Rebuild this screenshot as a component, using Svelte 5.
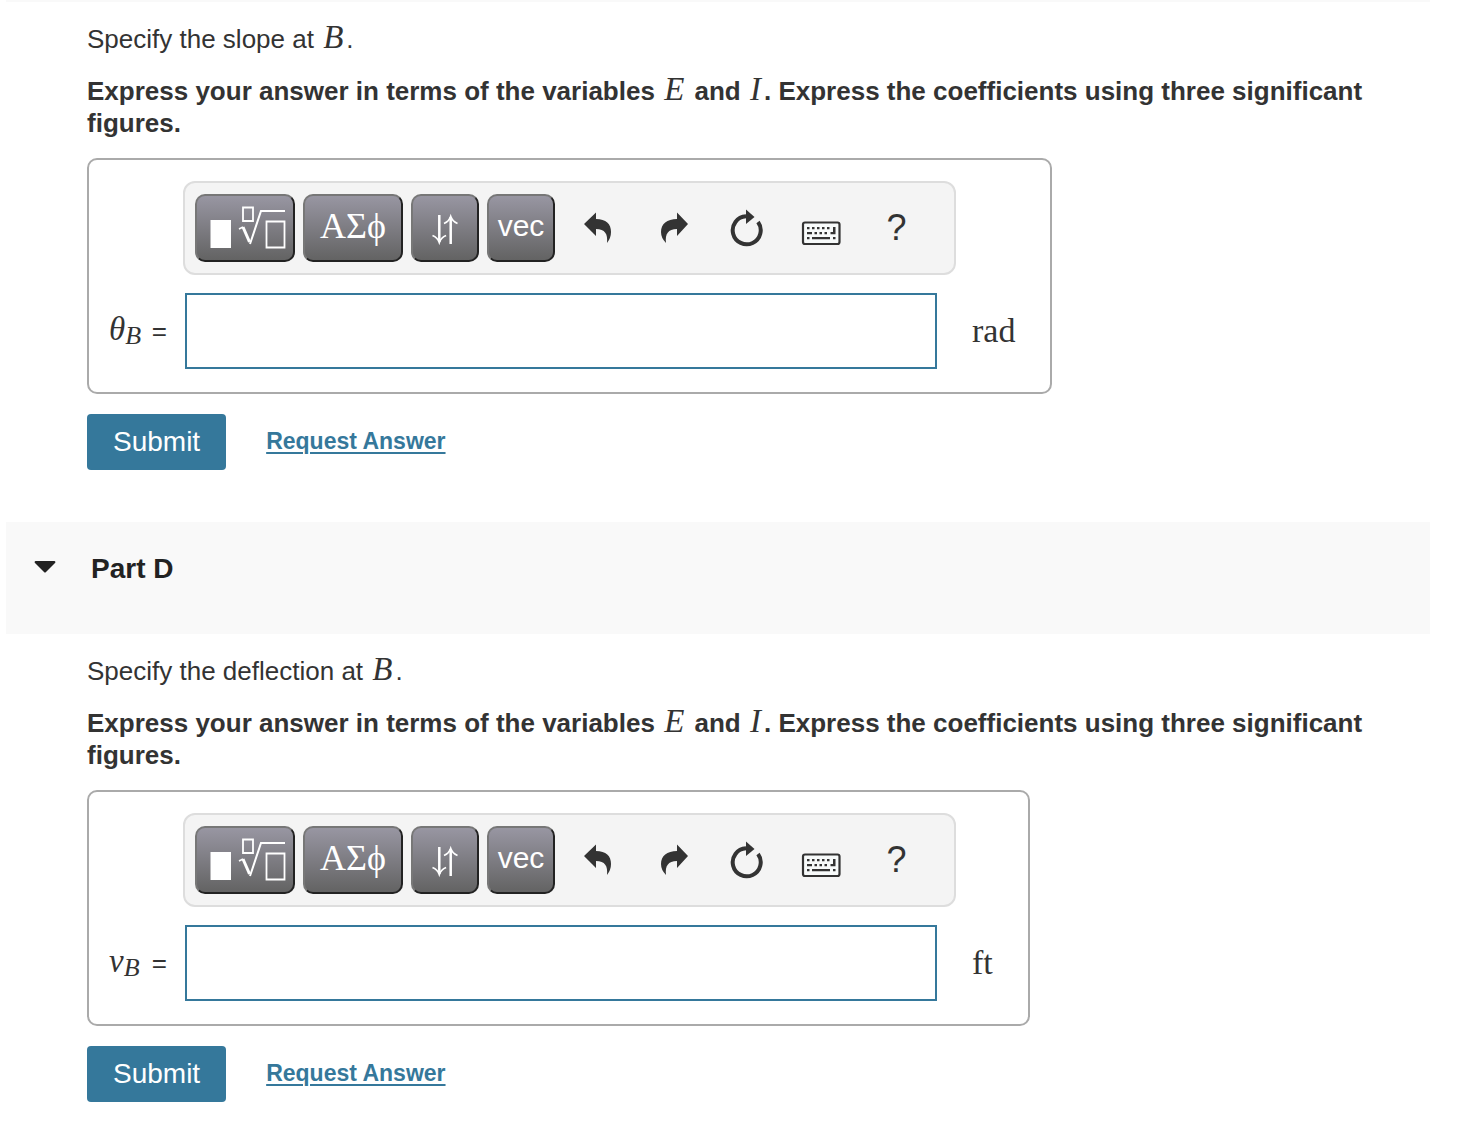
<script lang="ts">
  interface Part {
    id: string;
    heading: string | null;
    quantity: string;
    symbol: string;
    unit: string;
  }

  const parts: Part[] = [
    { id: 'part-c', heading: null, quantity: 'slope', symbol: 'θ', unit: 'rad' },
    { id: 'part-d', heading: 'Part D', quantity: 'deflection', symbol: 'v', unit: 'ft' }
  ];

  let answers = $state(['', '']);
  let open = $state([true, true]);
</script>

<main>
  {#each parts as part, i}
    <section>
      <header class:strip={!part.heading}>
        {#if part.heading}
          <h2>
            <button type="button" class="toggle" aria-expanded={open[i]} onclick={() => (open[i] = !open[i])}>
              <svg class="caret" class:closed={!open[i]} viewBox="0 0 22 16" aria-hidden="true">
                <path d="M1.500 0h19q1.600 .6 .5 2l-9 9q-1 1-2 0l-9-9q-1.100-1.400 .5-2z" fill="#222" />
              </svg>
              {part.heading}
            </button>
          </h2>
        {/if}
      </header>

      {#if open[i]}
        <div class="body">
          <p>Specify the {part.quantity} at <i class="math">B</i>.</p>
          <p class="instructions">
            Express your answer in terms of the variables <i class="math">E</i> and <i class="math">I</i>. Express the
            coefficients using three significant figures.
          </p>

          <form id={part.id} class="answer" onsubmit={(e) => e.preventDefault()}>
            <div class="toolbar" role="toolbar" aria-label="Math tools">
              <button type="button" class="key wide" aria-label="Templates">
                <svg viewBox="2 2 96 64" aria-hidden="true">
                  <path d="M15.500 26h20.500v28h-20.500z" fill="#fff" />
                  <g fill="none" stroke="#fff">
                    <path d="M48 13.500h10v13.500h-10z" stroke-width="1.800" />
                    <path d="M71.500 27.500h18v26h-18z" stroke-width="1.800" />
                    <path d="M44 35l4-2" stroke-width="1.600" />
                    <path d="M48 33l6.500 15" stroke-width="3" />
                    <path d="M55 50L66 17h24" stroke-width="2" />
                  </g>
                </svg>
              </button>
              <button type="button" class="key wide greek" aria-label="Symbols">ΑΣϕ</button>
              <button type="button" class="key" aria-label="Subscript and superscript">
                <svg viewBox="2 2 64 64" aria-hidden="true">
                  <g fill="none" stroke="#fff" stroke-width="2.500">
                    <path d="M28.300 21v27M39.700 50V23" />
                    <path d="M21.500 41.500q5 2 6.800 7q1.800-5 6.800-7M33 29.500q5-2 6.700-7q1.800 5 6.800 7" stroke-width="1.800" />
                  </g>
                </svg>
              </button>
              <button type="button" class="key vec">vec</button>

              <div class="tools">
                <button type="button" class="tool" aria-label="Undo">
                  <svg viewBox="0 0 67 68" aria-hidden="true">
                    <path d="M19 30L31 18.500V25C41 25 46 30 46 38Q46 44 42 49C43 40 40 35 31 35V42z" fill="#333" />
                  </svg>
                </button>
                <button type="button" class="tool" aria-label="Redo">
                  <svg viewBox="0 0 67 68" aria-hidden="true">
                    <path d="M48 30L37 18.500V25C27 25 21 30 21 38Q21 44 26 49C25 40 28 35 37 35V42z" fill="#333" />
                  </svg>
                </button>
                <button type="button" class="tool" aria-label="Reset">
                  <svg viewBox="0 0 67 68" aria-hidden="true">
                    <path d="M43 28A14 14 0 1 1 31 22.300" fill="none" stroke="#333" stroke-width="4" />
                    <path d="M31 15.500l8.500 7.500l-8.500 7z" fill="#333" />
                  </svg>
                </button>
                <button type="button" class="tool" aria-label="Keyboard">
                  <svg viewBox="0 0 67 68" aria-hidden="true">
                    <rect x="13" y="28.500" width="36.500" height="21.500" rx="2" fill="#f7fafa" stroke="#333" stroke-width="2.200" />
                    <path
                      d="M17 33h2.500v2.200h-2.500zM22 33h2.500v2.200h-2.500zM27 33h2.500v2.200h-2.500zM32 33h2.500v2.200h-2.500zM37 33h2.500v2.200h-2.500zM43 33h2.500v7.200h-5v-2.200h2.500zM17 38h5v2.200h-5zM24.500 38h2.500v2.200h-2.500zM29.500 38h2.500v2.200h-2.500zM34.500 38h2.500v2.200h-2.500zM17 43h2.500v2.200h-2.500zM22 43h18v2.200h-18zM43 43h2.500v2.200h-2.500z"
                      fill="#333"
                    />
                  </svg>
                </button>
                <button type="button" class="tool help" aria-label="Help">?</button>
              </div>
            </div>

            <label for="{part.id}-answer">
              <i class="math">{part.symbol}</i><sub>B</sub>
              <span class="equals">=</span>
            </label>
            <input id="{part.id}-answer" type="text" autocomplete="off" bind:value={answers[i]} />
            <span class="unit">{part.unit}</span>
          </form>

          <div class="actions">
            <button type="submit" form={part.id} class="submit">Submit</button>
            <a href="#{part.id}">Request Answer</a>
          </div>
        </div>
      {/if}
    </section>
  {/each}
</main>

<style>
  :global(body) {
    margin: 0;
    background: #fff;
  }

  main {
    padding: 0 42px 0 6px;
    font-family: 'Liberation Sans', Arial, sans-serif;
    font-size: 26px;
    line-height: 32px;
    color: #333;
  }

  button {
    font-family: inherit;
    cursor: pointer;
  }

  header {
    box-sizing: border-box;
    height: 112px;
    padding: 31px 28px;
    background: #f9f9f9;
  }

  header.strip {
    height: 2px;
    padding: 0;
  }

  h2 {
    margin: 0;
    font-size: 28px;
  }

  .toggle {
    display: flex;
    align-items: center;
    gap: 35px;
    padding: 0;
    border: 0;
    background: none;
    color: #222;
    font-size: 28px;
    font-weight: 700;
    line-height: 32px;
  }

  .caret {
    width: 22px;
    height: 16px;
  }

  .caret.closed {
    transform: rotate(-90deg);
  }

  .body {
    padding: 21px 0 52px 81px;
  }

  p {
    margin: 0 0 20px;
  }

  .instructions {
    margin-bottom: 19px;
    font-weight: 700;
  }

  .math,
  sub {
    font-family: 'Liberation Serif', 'Times New Roman', serif;
    font-size: 33px;
    font-style: italic;
    font-weight: 400;
    line-height: 24px;
  }

  p .math {
    margin: 0 3px 0 2px;
  }

  sub {
    position: relative;
    top: 4px;
    font-size: 26px;
    vertical-align: baseline;
  }

  .answer {
    display: grid;
    grid-template-columns: 74px minmax(0, 789px) auto;
    row-gap: 18px;
    align-items: center;
    box-sizing: border-box;
    width: fit-content;
    max-width: 100%;
    padding: 21px 35px 23px 20px;
    border: 2px solid #aaa;
    border-radius: 10px;
  }

  .toolbar {
    grid-column: 2;
    display: flex;
    gap: 8px;
    box-sizing: border-box;
    margin-right: 16px;
    padding: 11px 10px;
    border: 2px solid #ddd;
    border-radius: 12px;
    background: #f4f4f4;
  }

  .key {
    flex: none;
    box-sizing: border-box;
    width: 68px;
    height: 68px;
    padding: 0;
    border: 2px solid;
    border-color: #777 #222 #222 #777;
    border-radius: 10px;
    background: linear-gradient(#9896a2, #636363);
    color: #fff;
  }

  .wide {
    width: 100px;
  }

  .key svg,
  .tool svg {
    display: block;
    width: 100%;
    height: 100%;
  }

  .greek {
    padding-bottom: 4px;
    font-family: 'Liberation Serif', 'Times New Roman', serif;
    font-size: 36px;
  }

  .vec {
    padding-bottom: 4px;
    font-size: 30px;
  }

  .tools {
    display: flex;
    gap: 8px;
    margin-left: 2px;
  }

  .tool {
    width: 67px;
    height: 68px;
    padding: 0;
    border: 0;
    background: none;
    color: #333;
  }

  .help {
    padding-right: 4px;
    font-size: 36px;
  }

  label {
    grid-column: 1;
    display: flex;
    align-items: baseline;
    padding-right: 16px;
  }

  .equals {
    margin-left: auto;
  }

  input {
    box-sizing: border-box;
    height: 76px;
    margin: 0 35px 0 2px;
    padding: 0 12px;
    border: 2px solid #35789b;
    border-radius: 0;
    background: #fff;
    color: #333;
    font-family: inherit;
    font-size: 26px;
  }

  .unit {
    font-family: 'Liberation Serif', 'Times New Roman', serif;
    font-size: 34px;
  }

  .actions {
    display: flex;
    align-items: center;
    gap: 40px;
    margin-top: 20px;
  }

  .submit {
    height: 56px;
    padding: 0 26px;
    border: 0;
    border-radius: 4px;
    background: #35789b;
    color: #fff;
    font-size: 28px;
  }

  a {
    padding-bottom: 2px;
    color: #35789b;
    font-size: 23px;
    font-weight: 700;
    text-decoration-thickness: 2px;
    text-underline-offset: 3px;
  }
</style>
